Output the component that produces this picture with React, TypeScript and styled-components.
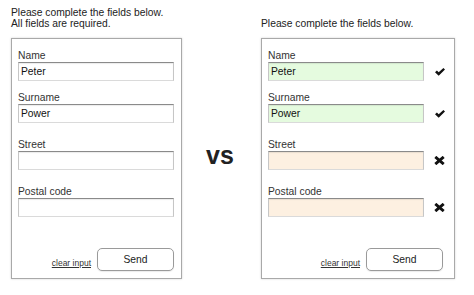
import React from "react";
import styled, { createGlobalStyle } from "styled-components";

const Global = createGlobalStyle`
  html, body { margin: 0; padding: 0; background: #ffffff; }
  body { font-family: "Liberation Sans", Arial, sans-serif; color: #222; }
`;

const Page = styled.div`
  display: flex;
  align-items: flex-start;
  padding-left: 11px;
  width: 474px;
  height: 295px;
  box-sizing: border-box;
`;

const Column = styled.div<{ $w: number }>`
  width: ${(p) => p.$w}px;
  display: flex;
  flex-direction: column;
`;

const Intro = styled.div`
  height: 38px;
  box-sizing: border-box;
  padding-bottom: 9px;
  display: flex;
  flex-direction: column;
  justify-content: flex-end;
  font-size: 10.3px;
  line-height: 11px;
  color: #222;
`;

const Panel = styled.div<{ $pr: number }>`
  height: 241px;
  box-sizing: border-box;
  border: 1px solid #a9a9a9;
  box-shadow: 0 0 2px rgba(0, 0, 0, 0.18);
  padding: 11px ${(p) => p.$pr}px 7px 6px;
  display: flex;
  flex-direction: column;
  background: #fff;
`;

const Field = styled.div<{ $gap: number }>`
  display: flex;
  flex-direction: column;
  margin-top: ${(p) => p.$gap}px;
`;

const Label = styled.div`
  font-size: 10.3px;
  line-height: 12px;
  height: 12px;
  color: #333;
`;

const InputRow = styled.div`
  display: flex;
  align-items: center;
`;

type Tone = "plain" | "ok" | "bad";

const Input = styled.div<{ $tone: Tone }>`
  width: 156px;
  height: 19px;
  box-sizing: border-box;
  flex: none;
  border: 1px solid #c6c6c6;
  border-top-color: #8a8a8a;
  border-bottom-color: #dadada;
  box-shadow: inset 0 1px 1px rgba(0, 0, 0, 0.08);
  background: ${(p) =>
    p.$tone === "ok" ? "#e5fbdf" : p.$tone === "bad" ? "#fdf0e1" : "#ffffff"};
  padding: 0 2px;
  font-size: 10.3px;
  line-height: 17px;
  color: #111;
`;

const Status = styled.div`
  flex: 1;
  display: flex;
  justify-content: center;
  align-items: center;
  padding-left: 1px;
`;

const Footer = styled.div<{ $pr: number }>`
  margin-top: auto;
  display: flex;
  justify-content: flex-end;
  align-items: flex-end;
  gap: 6px;
  padding-right: ${(p) => p.$pr}px;
`;

const Clear = styled.a`
  font-size: 8.5px;
  line-height: 10px;
  color: #333;
  text-decoration: underline;
  margin-bottom: 3px;
`;

const SendButton = styled.button`
  width: 77px;
  height: 23px;
  box-sizing: border-box;
  border: 1px solid #9a9a9a;
  border-radius: 5px;
  background: #fff;
  box-shadow: 0 1px 1px rgba(0, 0, 0, 0.08);
  font-family: "Liberation Sans", Arial, sans-serif;
  font-size: 10.3px;
  color: #222;
  padding: 0;
`;

const Middle = styled.div`
  width: 79px;
  height: 279px;
  box-sizing: border-box;
  padding-top: 32px;
  display: flex;
  align-items: center;
  justify-content: center;
`;

const Versus = styled.div`
  font-size: 25px;
  line-height: 25px;
  font-weight: bold;
  color: #222;
  margin-right: 3px;
`;

const Check = () => (
  <svg width="10" height="8" viewBox="0 0 10 8">
    <path d="M0 4.2 L1.9 2.5 L3.7 4.3 L8.4 0 L10 1.6 L3.7 7.8 Z" fill="#111" />
  </svg>
);

const Cross = () => (
  <svg width="11" height="9" viewBox="0 0 11 9">
    <path d="M1.3 0.9 L9.7 8.1 M9.7 0.9 L1.3 8.1" stroke="#111" strokeWidth="2.9" />
  </svg>
);

type FieldDef = { label: string; value: string; gap: number; tone: Tone };

const leftFields: FieldDef[] = [
  { label: "Name", value: "Peter", gap: 0, tone: "plain" },
  { label: "Surname", value: "Power", gap: 11, tone: "plain" },
  { label: "Street", value: "", gap: 16, tone: "plain" },
  { label: "Postal code", value: "", gap: 16, tone: "plain" },
];

const rightFields: FieldDef[] = [
  { label: "Name", value: "Peter", gap: 0, tone: "ok" },
  { label: "Surname", value: "Power", gap: 11, tone: "ok" },
  { label: "Street", value: "", gap: 16, tone: "bad" },
  { label: "Postal code", value: "", gap: 16, tone: "bad" },
];

export default function App() {
  return (
    <>
      <Global />
      <Page>
        <Column $w={171}>
          <Intro>
            <div>Please complete the fields below.</div>
            <div>All fields are required.</div>
          </Intro>
          <Panel $pr={7}>
            {leftFields.map((f) => (
              <Field key={f.label} $gap={f.gap}>
                <Label>{f.label}</Label>
                <InputRow>
                  <Input $tone={f.tone}>{f.value}</Input>
                </InputRow>
              </Field>
            ))}
            <Footer $pr={0}>
              <Clear>clear input</Clear>
              <SendButton>Send</SendButton>
            </Footer>
          </Panel>
        </Column>
        <Middle>
          <Versus>vs</Versus>
        </Middle>
        <Column $w={194}>
          <Intro>
            <div>Please complete the fields below.</div>
          </Intro>
          <Panel $pr={0}>
            {rightFields.map((f) => (
              <Field key={f.label} $gap={f.gap}>
                <Label>{f.label}</Label>
                <InputRow>
                  <Input $tone={f.tone}>{f.value}</Input>
                  <Status>{f.tone === "ok" ? <Check /> : <Cross />}</Status>
                </InputRow>
              </Field>
            ))}
            <Footer $pr={11}>
              <Clear>clear input</Clear>
              <SendButton>Send</SendButton>
            </Footer>
          </Panel>
        </Column>
      </Page>
    </>
  );
}
